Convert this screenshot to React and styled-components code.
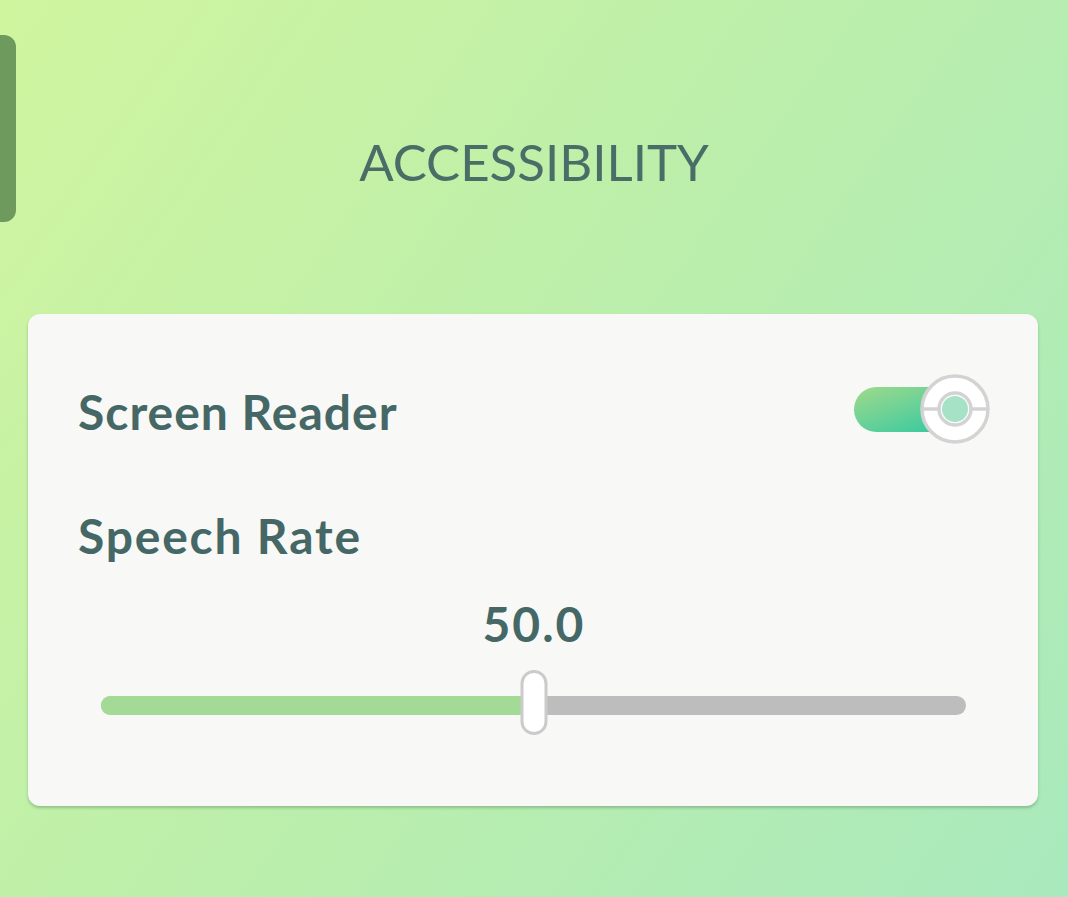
import React, { useState } from "react";
import styled, { createGlobalStyle } from "styled-components";

const GlobalStyle = createGlobalStyle`
  html, body {
    margin: 0;
    padding: 0;
  }
  body {
    font-family: Lato, "Noto Sans", sans-serif;
  }
`;

const Page = styled.div`
  position: relative;
  width: 1068px;
  height: 897px;
  overflow: hidden;
  background: linear-gradient(125deg, #d0f59f 0%, #bdefaa 45%, #a9e9bd 100%);
  display: flex;
  flex-direction: column;
`;

const SideHandle = styled.div`
  position: absolute;
  left: 0;
  top: 35px;
  width: 16px;
  height: 187px;
  background: #6f9a5d;
  border-radius: 0 12px 12px 0;
`;

const Title = styled.h1`
  margin: 135px 0 0;
  font-size: 51px;
  line-height: 54px;
  font-weight: 400;
  text-align: center;
  color: #4a6d67;
`;

const Card = styled.section`
  margin: 125px 30px 0 28px;
  height: 492px;
  box-sizing: border-box;
  padding: 60px 48px 0 50px;
  background: #f8f8f6;
  border-radius: 12px;
  box-shadow: 0 2px 3px rgba(60, 110, 70, 0.35);
  display: flex;
  flex-direction: column;
`;

const Row = styled.div`
  display: flex;
  align-items: center;
  justify-content: space-between;
  height: 70px;
`;

const Label = styled.div`
  font-size: 48px;
  line-height: 48px;
  font-weight: 700;
  color: #456866;
  margin-top: ${(p) => p.$offset || 0}px;
  letter-spacing: ${(p) => p.$spacing || 1}px;
`;

const ToggleWrap = styled.button`
  position: relative;
  width: 136px;
  height: 70px;
  padding: 0;
  border: none;
  background: none;
  cursor: pointer;
`;

const ToggleTrack = styled.span`
  position: absolute;
  left: 0;
  top: 13px;
  width: 100px;
  height: 45px;
  border-radius: 23px;
  background: linear-gradient(160deg, #9fda8a 0%, #6fd296 45%, #2fc8a2 100%);
`;

const Knob = styled.svg`
  position: absolute;
  right: 0;
  top: 0;
  width: 70px;
  height: 70px;
`;

const ValueText = styled.div`
  margin-top: 40px;
  text-align: center;
  font-size: 48px;
  line-height: 48px;
  font-weight: 700;
  color: #456866;
  letter-spacing: 2px;
`;

const SliderArea = styled.div`
  position: relative;
  margin: 22px 24px 0 23px;
  height: 65px;
  display: flex;
  align-items: center;
`;

const Track = styled.div`
  position: relative;
  width: 100%;
  height: 19px;
  margin-top: 6px;
  border-radius: 10px;
  background: #bdbdbd;
  overflow: hidden;
`;

const Fill = styled.div`
  height: 100%;
  background: #a3db96;
`;

const Thumb = styled.div`
  position: absolute;
  top: 0;
  width: 27px;
  height: 65px;
  box-sizing: border-box;
  transform: translateX(-50%);
  background: #ffffff;
  border: 3px solid #cbcbcb;
  border-radius: 14px;
`;

export default function App() {
  const [on, setOn] = useState(true);
  const rate = 50;
  const pct = (rate / 100) * 100;

  return (
    <>
      <GlobalStyle />
      <Page>
        <SideHandle />
        <Title>ACCESSIBILITY</Title>
        <Card>
          <Row>
            <Label $offset={5}>Screen Reader</Label>
            <ToggleWrap onClick={() => setOn(!on)} aria-label="Screen Reader">
              <ToggleTrack />
              <Knob viewBox="0 0 70 70">
                <circle cx="35" cy="35" r="33" fill="#ffffff" stroke="#d3d3d3" strokeWidth="3.5" />
                <line x1="2" y1="35" x2="68" y2="35" stroke="#d3d3d3" strokeWidth="3.5" />
                <circle cx="35" cy="35" r="16" fill="#ffffff" stroke="#d3d3d3" strokeWidth="3.5" />
                <circle cx="35" cy="35" r="13" fill="#a5e2c6" />
              </Knob>
            </ToggleWrap>
          </Row>
          <Label $offset={68} $spacing={1.8}>Speech Rate</Label>
          <ValueText>{rate.toFixed(1)}</ValueText>
          <SliderArea>
            <Track>
              <Fill style={{ width: `${pct}%` }} />
            </Track>
            <Thumb style={{ left: `${pct}%` }} />
          </SliderArea>
        </Card>
      </Page>
    </>
  );
}
